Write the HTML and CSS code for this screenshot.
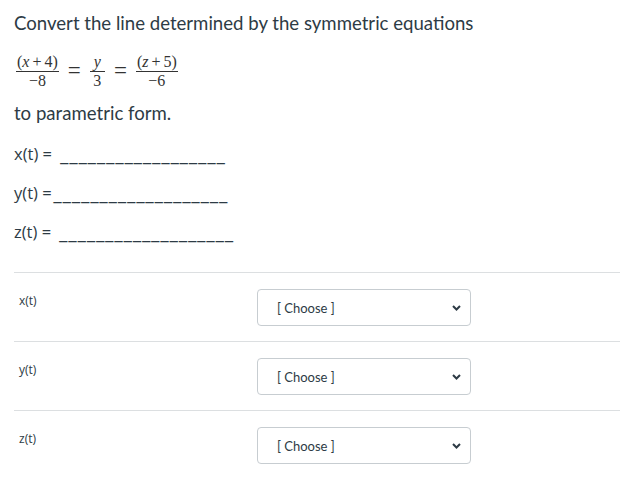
FILE: index.html
```html
<!DOCTYPE html>
<html lang="en">
<head>
<meta charset="utf-8">
<title>Parametric form</title>
<link rel="stylesheet" href="styles.css">
</head>
<body>
<div class="page">
  <p class="title">Convert the line determined by the symmetric equations</p>
  <div class="math">
    <span class="frac"><span class="num">(<i>x</i><span class="op">+</span>4)</span><span class="den">−8</span></span>
    <span class="eq">=</span>
    <span class="frac small"><span class="num"><i>y</i></span><span class="den">3</span></span>
    <span class="eq">=</span>
    <span class="frac"><span class="num">(<i>z</i><span class="op">+</span>5)</span><span class="den">−6</span></span>
  </div>
  <p class="sub">to parametric form.</p>
  <div class="blanks">
    <p class="blank">x(t) = <span class="line gap">__________________</span></p>
    <p class="blank">y(t) =<span class="line tight">___________________</span></p>
    <p class="blank">z(t) = <span class="line gap">___________________</span></p>
  </div>
  <div class="rows">
    <div class="row">
      <span class="label">x(t)</span>
      <div class="select"><span>[ Choose ]</span><svg width="9" height="6" viewBox="0 0 9 6"><path d="M1 1 L4.5 4.5 L8 1" fill="none" stroke="#2d3b45" stroke-width="2"/></svg></div>
    </div>
    <div class="row">
      <span class="label">y(t)</span>
      <div class="select"><span>[ Choose ]</span><svg width="9" height="6" viewBox="0 0 9 6"><path d="M1 1 L4.5 4.5 L8 1" fill="none" stroke="#2d3b45" stroke-width="2"/></svg></div>
    </div>
    <div class="row">
      <span class="label">z(t)</span>
      <div class="select"><span>[ Choose ]</span><svg width="9" height="6" viewBox="0 0 9 6"><path d="M1 1 L4.5 4.5 L8 1" fill="none" stroke="#2d3b45" stroke-width="2"/></svg></div>
    </div>
  </div>
</div>
</body>
</html>
```
FILE: styles.css
```css
html, body {
  margin: 0;
  padding: 0;
  background: #ffffff;
}
.page {
  padding: 11px 14px 0 14px;
  color: #2d3b45;
  font-family: Lato, "Liberation Sans", sans-serif;
}
.title {
  margin: 0;
  font-size: 18.6px;
  line-height: 24px;
}
.math {
  display: flex;
  align-items: center;
  margin: 19px 0 0 2px;
  font-family: "Liberation Serif", serif;
  color: #333;
  height: 34px;
}
.frac {
  display: inline-flex;
  flex-direction: column;
  align-items: center;
  font-family: "Liberation Serif", serif;
  font-size: 16px;
}
.frac i {
  font-family: "Liberation Serif", serif;
  font-style: italic;
}
.frac .num {
  padding: 0 1px 2px;
  border-bottom: 1px solid #333;
  line-height: 14px;
}
.frac .den {
  line-height: 15px;
  padding-top: 1px;
}
.frac.small .num {
  padding: 0 4px 2px;
}
.op {
  margin: 0 3px;
}
.eq {
  margin: 0 9px;
  font-family: "Liberation Serif", serif;
  font-size: 23px;
  line-height: 20px;
}
.sub {
  margin: 13px 0 0;
  font-size: 18.6px;
  line-height: 24px;
}
.blanks {
  margin-top: 18px;
  font-family: "Open Sans", sans-serif;
  font-size: 16.5px;
}
.blank {
  margin: 0 0 17px;
  line-height: 22px;
  height: 22px;
  white-space: nowrap;
}
.blank .line {
  font-family: "DejaVu Sans", sans-serif;
  font-size: 16px;
  letter-spacing: 1.2px;
}
.blank .line.gap {
  margin-left: 4px;
}
.blank .line.tight {
  margin-left: 2px;
}
.rows {
  margin-top: 29px;
}
.row {
  display: flex;
  align-items: flex-start;
  border-top: 1px solid #dcdfe1;
  padding: 16px 0 16px 5px;
  height: 36px;
  margin-right: -3px;
}
.label {
  width: 238px;
  font-family: "Open Sans", sans-serif;
  font-size: 12px;
  line-height: 16px;
  padding-top: 4px;
}
.select {
  display: flex;
  align-items: center;
  justify-content: space-between;
  box-sizing: border-box;
  width: 214px;
  height: 37px;
  padding: 0 9px 0 19px;
  border: 1px solid #c7cdd1;
  border-radius: 4px;
  font-size: 13px;
  color: #2d3b45;
}
```
